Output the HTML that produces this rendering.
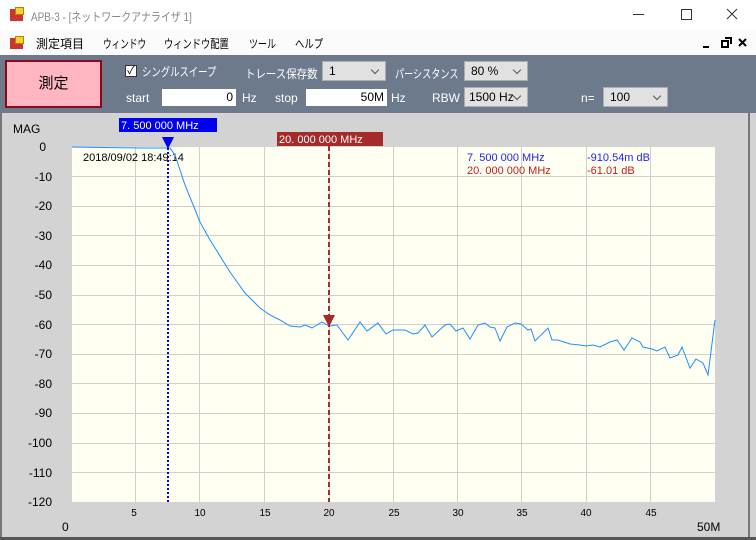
<!DOCTYPE html>
<html><head><meta charset="utf-8"><style>
*{margin:0;padding:0;box-sizing:border-box}
body{width:756px;height:540px;overflow:hidden;background:#fff;font-family:"Liberation Sans","Noto Sans CJK JP",sans-serif;font-size:12px;position:relative}
.a{position:absolute;white-space:nowrap;transform-origin:0 0}
.cb{position:absolute;background:#e1e1e1;border:1px solid #adadad;height:20px;font-size:12px;padding:2px 6px;color:#000}
.cb:after{content:"";position:absolute;right:7px;top:5px;width:5px;height:5px;border-right:1px solid #555;border-bottom:1px solid #555;transform:rotate(45deg)}
.tb{position:absolute;background:#fff;height:17px;text-align:right;padding:1px 3px;font-size:12px}
.w{color:#fff}
</style></head><body>
<!-- title -->
<div class="a" style="left:10px;top:9px;width:13px;height:12px;background:#c33"></div>
<div class="a" style="left:15px;top:7px;width:9px;height:8px;background:#fc3;border:1px solid #a80"></div>
<div class="a" style="left:31px;top:8px;font-size:12px;color:#888;transform:scaleX(0.83)">APB-3 - [ネットワークアナライザ 1]</div>
<svg class="a" style="left:0;top:0" width="756" height="30"><g stroke="#333" stroke-width="1" fill="none"><path d="M633 14.5H644"/><rect x="681.5" y="9.5" width="10" height="10"/><path d="M727 9L737 19M737 9L727 19"/></g></svg>
<!-- menu -->
<div class="a" style="left:0;top:30px;width:756px;height:25px;background:#fbfbfb"></div>
<div class="a" style="left:10px;top:38px;width:13px;height:11px;background:#c33"></div>
<div class="a" style="left:15px;top:36px;width:9px;height:8px;background:#fc3;border:1px solid #a80"></div>
<div class="a" style="left:36px;top:35px">測定項目</div>
<div class="a" style="left:103px;top:35px;transform:scaleX(0.72)">ウィンドウ</div>
<div class="a" style="left:164px;top:35px;transform:scaleX(0.77)">ウィンドウ配置</div>
<div class="a" style="left:249px;top:35px;transform:scaleX(0.75)">ツール</div>
<div class="a" style="left:295px;top:35px;transform:scaleX(0.78)">ヘルプ</div>
<svg class="a" style="left:700px;top:36px" width="56" height="16"><g fill="none" stroke="#000" stroke-width="2"><path d="M3 11H9"/><rect x="22" y="5" width="6" height="6"/><path d="M25 2H31V8"/><path d="M39 3L46 10M46 3L39 10"/></g></svg>
<!-- panel -->
<div class="a" style="left:0;top:55px;width:756px;height:58px;background:#6c7a8b"></div>
<div class="a" style="left:5px;top:60px;width:97px;height:48px;background:#ffb6c1;border:2px solid #8b0a1a;text-align:center;line-height:44px;font-size:15px">測定</div>
<div class="a" style="left:125px;top:65px;width:12px;height:12px;background:#fff;border:1px solid #333;font-size:11px;line-height:10px;text-align:center">✓</div>
<div class="a w" style="left:142px;top:63px;transform:scaleX(0.78)">シングルスイープ</div>
<div class="a w" style="left:245px;top:65px;transform:scaleX(0.87)">トレース保存数</div>
<div class="cb" style="left:322px;top:61px;width:64px">1</div>
<div class="a w" style="left:395px;top:65px;transform:scaleX(0.76)">パーシスタンス</div>
<div class="cb" style="left:464px;top:61px;width:64px">80 %</div>
<div class="a w" style="left:126px;top:91px">start</div>
<div class="tb" style="left:162px;top:89px;width:74px">0</div>
<div class="a w" style="left:242px;top:91px">Hz</div>
<div class="a w" style="left:275px;top:91px">stop</div>
<div class="tb" style="left:306px;top:89px;width:81px">50M</div>
<div class="a w" style="left:391px;top:91px">Hz</div>
<div class="a w" style="left:432px;top:91px">RBW</div>
<div class="cb" style="left:464px;top:87px;width:64px;padding-left:4px">1500 Hz</div>
<div class="a w" style="left:581px;top:91px">n=</div>
<div class="cb" style="left:603px;top:87px;width:65px">100</div>
<!-- chart -->
<div class="a" style="left:0;top:113px;width:756px;height:427px;background:#d3d3d3"></div>
<div class="a" style="left:0;top:113px;width:2px;height:427px;background:#777"></div>
<div class="a" style="left:748px;top:113px;width:2px;height:427px;background:#777"></div>
<div class="a" style="left:0;top:537px;width:756px;height:3px;background:#555"></div>
<svg class="a" style="left:0;top:0" width="756" height="540" font-family="Liberation Sans,sans-serif">
<rect x="72" y="147" width="643" height="355" fill="#fffff2"/>
<g stroke="#cfcfcf" stroke-width="1">
<path d="M135.5 147V502M199.5 147V502M264.5 147V502M329.5 147V502M393.5 147V502M457.5 147V502M521.5 147V502M586.5 147V502M650.5 147V502"/>
<path d="M72 176.5H715M72 206.5H715M72 235.5H715M72 265.5H715M72 295.5H715M72 324.5H715M72 354.5H715M72 383.5H715M72 413.5H715M72 443.5H715M72 472.5H715"/>
</g>
<g font-size="12" fill="#000" text-anchor="end">
<text x="46" y="151">0</text><text x="52" y="181">-10</text><text x="52" y="210">-20</text><text x="52" y="240">-30</text><text x="52" y="269">-40</text><text x="52" y="299">-50</text><text x="52" y="329">-60</text><text x="52" y="358">-70</text><text x="52" y="388">-80</text><text x="52" y="417">-90</text><text x="52" y="447">-100</text><text x="52" y="477">-110</text><text x="52" y="506">-120</text>
</g>
<text x="13" y="133" font-size="12">MAG</text>
<g font-size="10" text-anchor="middle"><text x="134" y="516">5</text><text x="200" y="516">10</text><text x="265" y="516">15</text><text x="329" y="516">20</text><text x="394" y="516">25</text><text x="458" y="516">30</text><text x="522" y="516">35</text><text x="586" y="516">40</text><text x="651" y="516">45</text></g>
<text x="62" y="531" font-size="12">0</text>
<text x="697" y="531" font-size="12">50M</text>
<text x="83" y="161" font-size="11">2018/09/02 18:49:14</text>
<text x="467" y="161" font-size="11" fill="#2222ff">7. 500 000 MHz</text>
<text x="587" y="161" font-size="11" fill="#2222ff">-910.54m dB</text>
<text x="467" y="174" font-size="11" fill="#c02020">20. 000 000 MHz</text>
<text x="587" y="174" font-size="11" fill="#c02020">-61.01 dB</text>
<polyline fill="none" stroke="#1e8fff" stroke-width="1" points="72,147 140,148 170,148 175,155 185,185 200,222 210,240 230,272 245,293 260,308 270,315 280,320 290,326 300,327 305,325 312,328 322,322 329,326 337,325 348,340 360,322 367,331 378,323 386,334 393,330 405,330 413,334 418,333 425,325 432,337 445,325 450,324 456,331 463,328 470,339 478,325 485,323 490,327 495,328 500,341 507,327 515,323 521,324 528,330 531,329 535,341 548,328 552,340 558,340 570,344 580,345 586,346 593,345 600,347 610,342 617,340 624,350 632,338 640,342 643,347 652,349 657,351 665,347 670,358 678,355 682,347 690,368 696,359 703,363 708,375 715,320"/>
<line x1="168" y1="148" x2="168" y2="502" stroke="#0000ee" stroke-width="2" stroke-dasharray="2,2"/>
<line x1="329" y1="146" x2="329" y2="502" stroke="#a52a2a" stroke-width="2" stroke-dasharray="5,3"/>
<rect x="119" y="118" width="98" height="14" fill="#0000ee"/>
<text x="121" y="129" font-size="11" fill="#fff">7. 500 000 MHz</text>
<path d="M162 137H174L168 149Z" fill="#0000ee"/>
<rect x="277" y="132" width="106" height="14" fill="#a52a2a"/>
<text x="279" y="143" font-size="11" fill="#fff">20. 000 000 MHz</text>
<path d="M323 315H335L329 327Z" fill="#a52a2a"/>
</svg>
</body></html>
